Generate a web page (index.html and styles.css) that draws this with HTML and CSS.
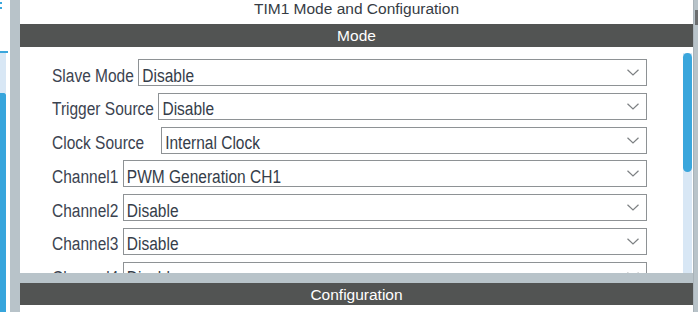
FILE: index.html
```html
<!DOCTYPE html>
<html lang="en">
<head>
  <meta charset="UTF-8">
  <title>TIM1 Mode and Configuration</title>
  <link rel="stylesheet" href="styles.css">
</head>
<body>
  <div class="app">
    <div class="side">
      <div class="side-marks"><span></span><span></span></div>
      <div class="side-line"></div>
      <div class="side-track"></div>
      <div class="side-thumb"></div>
    </div>
    <div class="gutter"></div>

    <div class="panel">
      <div class="panel-title">TIM1 Mode and Configuration</div>
      <div class="section-head">Mode</div>

      <div class="mode-body">
        <div class="mode-form">
          <div class="row">
            <span class="row-label">Slave Mode</span>
            <div class="combo"><span>Disable</span><svg width="12" height="7" viewBox="0 0 12 7"><polyline points="0.5,0.8 6,6 11.5,0.8"/></svg></div>
          </div>
          <div class="row">
            <span class="row-label">Trigger Source</span>
            <div class="combo"><span>Disable</span><svg width="12" height="7" viewBox="0 0 12 7"><polyline points="0.5,0.8 6,6 11.5,0.8"/></svg></div>
          </div>
          <div class="row">
            <span class="row-label">Clock Source</span>
            <div class="combo combo-wide-gap"><span>Internal Clock</span><svg width="12" height="7" viewBox="0 0 12 7"><polyline points="0.5,0.8 6,6 11.5,0.8"/></svg></div>
          </div>
          <div class="row">
            <span class="row-label">Channel1</span>
            <div class="combo"><span>PWM Generation CH1</span><svg width="12" height="7" viewBox="0 0 12 7"><polyline points="0.5,0.8 6,6 11.5,0.8"/></svg></div>
          </div>
          <div class="row">
            <span class="row-label">Channel2</span>
            <div class="combo"><span>Disable</span><svg width="12" height="7" viewBox="0 0 12 7"><polyline points="0.5,0.8 6,6 11.5,0.8"/></svg></div>
          </div>
          <div class="row">
            <span class="row-label">Channel3</span>
            <div class="combo"><span>Disable</span><svg width="12" height="7" viewBox="0 0 12 7"><polyline points="0.5,0.8 6,6 11.5,0.8"/></svg></div>
          </div>
          <div class="row">
            <span class="row-label">Channel4</span>
            <div class="combo"><span>Disable</span><svg width="12" height="7" viewBox="0 0 12 7"><polyline points="0.5,0.8 6,6 11.5,0.8"/></svg></div>
          </div>
        </div>
        <div class="vscroll"><div class="vscroll-thumb"></div></div>
      </div>

      <div class="divider"></div>
      <div class="section-head section-head-config">Configuration</div>
    </div>

    <div class="edge"><div class="edge-mark"></div></div>
  </div>
</body>
</html>
```

FILE: styles.css
```css
/* Page frame */
body {
  margin: 0;
  background: #fff;
  font-family: "Liberation Sans", Arial, sans-serif;
  overflow: hidden;
}
.app {
  display: flex;
  height: 312px;
  width: 698px;
}

/* Neighbouring panel (left) with its scrollbar */
.side {
  width: 10px;
  display: flex;
  flex-direction: column;
}
.side-marks {
  height: 51px;
  display: flex;
  flex-direction: column;
  gap: 3px;
  padding-top: 2px;
  box-sizing: border-box;
}
.side-marks span {
  width: 2px;
  height: 2px;
  background: #3aa6dc;
}
.side-line {
  height: 2px;
  width: 8px;
  background: #3aa6dc;
}
.side-track {
  height: 40px;
  width: 6px;
  background: #d8e7f5;
}
.side-thumb {
  flex: 1;
  width: 6px;
  background: #36a5dc;
  border-top-right-radius: 2px;
}
.gutter {
  width: 10px;
  background: #b8c3c9;
}
.edge {
  width: 5px;
  background: #b8c3c9;
  border-left: 1px solid #a9b3b9;
  box-sizing: border-box;
}
.edge-mark {
  margin: 10px 0 0 1px;
  height: 15px;
  background: #6b6e70;
}

/* Main panel */
.panel {
  flex: 1;
  display: flex;
  flex-direction: column;
}
.panel-title {
  height: 24px;
  text-align: center;
  font-size: 15.5px;
  line-height: 17px;
  color: #363c44;
}
.section-head {
  height: 23px;
  background: #525453;
  color: #fff;
  text-align: center;
  font-size: 15.5px;
  line-height: 24px;
}
.section-head-config {
  height: 22px;
  line-height: 23px;
}
.divider {
  height: 10px;
  background: #b8c3c9;
}

/* Mode form: the tool draws a tall, condensed face, so the text is stretched */
.mode-body {
  height: 226px;
  display: flex;
  overflow: hidden;
}
.mode-form {
  flex: 1;
  padding: 12px 36px 0 32px;
  display: flex;
  flex-direction: column;
  gap: 6.8px;
  font-size: 15.5px;
  color: #3b4350;
}
.row {
  display: flex;
  align-items: center;
  height: 27px;
  flex-shrink: 0;
}
.row-label,
.combo span {
  display: inline-block;
  white-space: nowrap;
  padding-top: 4px;
  transform: scaleY(1.24);
}
.combo {
  flex: 1;
  height: 27px;
  margin-left: 4.5px;
  box-sizing: border-box;
  border: 1px solid #8e9295;
  background: #fff;
  display: flex;
  align-items: center;
  justify-content: space-between;
  padding: 0 7px 0 3px;
}
.combo span { color: #353d49; }
.combo svg polyline {
  fill: none;
  stroke: #7d8083;
  stroke-width: 1.2;
}
.combo-wide-gap { margin-left: 17px; }

/* Custom scrollbar of the mode area */
.vscroll {
  width: 9px;
  margin: 6px 1px 0 0;
  background: #d8e7f5;
}
.vscroll-thumb {
  height: 119px;
  background: #3aa6dc;
  border-radius: 5px;
}
```
